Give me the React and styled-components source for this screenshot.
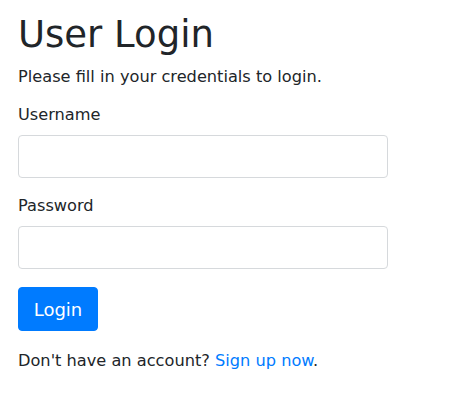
import React from "react";
import styled, { createGlobalStyle } from "styled-components";

const GlobalStyle = createGlobalStyle`
  html, body {
    margin: 0;
    background: #ffffff;
  }
  body {
    font-family: "DejaVu Sans", "Liberation Sans", sans-serif;
    font-size: 16.2px;
    line-height: 24px;
    color: #212529;
  }
`;

const Wrapper = styled.div`
  width: 370px;
  padding: 13px 18px;
`;

const Title = styled.h2`
  font-size: 37px;
  font-weight: 500;
  line-height: 1.2;
  margin: 0 0 8px;
`;

const Intro = styled.p`
  margin: 0 0 14px;
`;

const FormGroup = styled.div`
  margin-bottom: ${(p) => p.$mb || 16}px;
`;

const Label = styled.label`
  display: block;
  margin-bottom: 8px;
`;

const Input = styled.input`
  display: block;
  box-sizing: border-box;
  width: 100%;
  height: 43px;
  padding: 6px 12px;
  font: inherit;
  color: #495057;
  background: #fff;
  border: 1px solid #d6d9dc;
  border-radius: 4px;
  outline: none;
`;

const Button = styled.button`
  box-sizing: border-box;
  width: 80px;
  height: 44px;
  padding: 0;
  font-family: inherit;
  font-size: 18px;
  color: #fff;
  background: #007bff;
  border: 1px solid #007bff;
  border-radius: 4px;
  cursor: pointer;
`;

const Footer = styled.p`
  margin: 0;
  padding-top: 2px;
`;

const Link = styled.a`
  color: #007bff;
  text-decoration: none;
`;

export default function App() {
  return (
    <>
      <GlobalStyle />
      <Wrapper>
        <Title>User Login</Title>
        <Intro>Please fill in your credentials to login.</Intro>
        <form onSubmit={(e) => e.preventDefault()}>
          <FormGroup>
            <Label>Username</Label>
            <Input type="text" name="username" />
          </FormGroup>
          <FormGroup $mb={18}>
            <Label>Password</Label>
            <Input type="password" name="password" />
          </FormGroup>
          <FormGroup>
            <Button type="submit">Login</Button>
          </FormGroup>
          <Footer>
            Don't have an account? <Link href="#">Sign up now</Link>.
          </Footer>
        </form>
      </Wrapper>
    </>
  );
}
